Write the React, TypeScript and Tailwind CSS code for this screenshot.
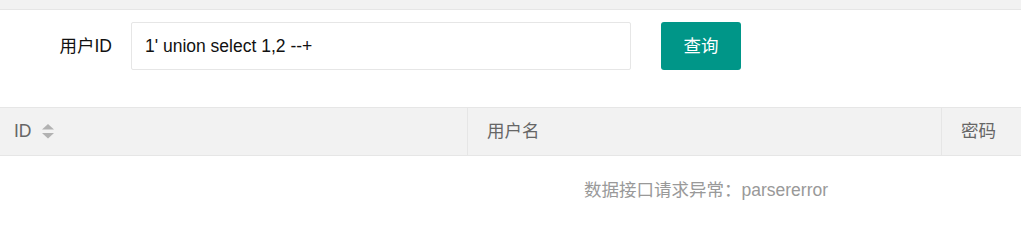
import React from "react";

const font = { fontFamily: '"Liberation Sans", Arial, "Noto Sans CJK SC", sans-serif' };

function SortIcon() {
  return (
    <svg width="12" height="16" viewBox="0 0 12 16" className="ml-[10px]">
      <polygon points="6,0 12,5.5 0,5.5" fill="#b2b2b2" />
      <polygon points="0,9 12,9 6,14.5" fill="#b2b2b2" />
    </svg>
  );
}

export default function App() {
  return (
    <div className="w-[1021px] h-[242px] bg-white overflow-hidden text-[17.5px]" style={font}>
      <div className="h-[10px] bg-[#f2f2f2] border-b border-[#e6e6e6]" />
      <div className="flex items-center pt-[12px] pb-[37px]">
        <label className="w-[131px] pr-[19px] text-right text-[#111] leading-[20px]">用户ID</label>
        <div className="w-[500px] h-[48px] border border-[#e6e6e6] rounded-[2px] flex items-center pl-[13px] text-[#111]">
          1' union select 1,2 --+
        </div>
        <button className="ml-[30px] w-[80px] h-[48px] rounded-[3px] bg-[#009688] text-white text-[17.5px]">
          查询
        </button>
      </div>
      <div className="w-[1412px]">
        <div className="grid grid-cols-[468px_474px_470px] h-[49px] bg-[#f2f2f2] border-y border-[#e6e6e6] text-[#666]">
          <div className="flex items-center pl-[14px] border-r border-[#e6e6e6]">
            <span>ID</span>
            <SortIcon />
          </div>
          <div className="flex items-center pl-[19px] border-r border-[#e6e6e6]">用户名</div>
          <div className="flex items-center pl-[19px]">密码</div>
        </div>
        <div className="pt-[21px] text-center leading-[26px] text-[#999]">数据接口请求异常：parsererror</div>
      </div>
    </div>
  );
}
